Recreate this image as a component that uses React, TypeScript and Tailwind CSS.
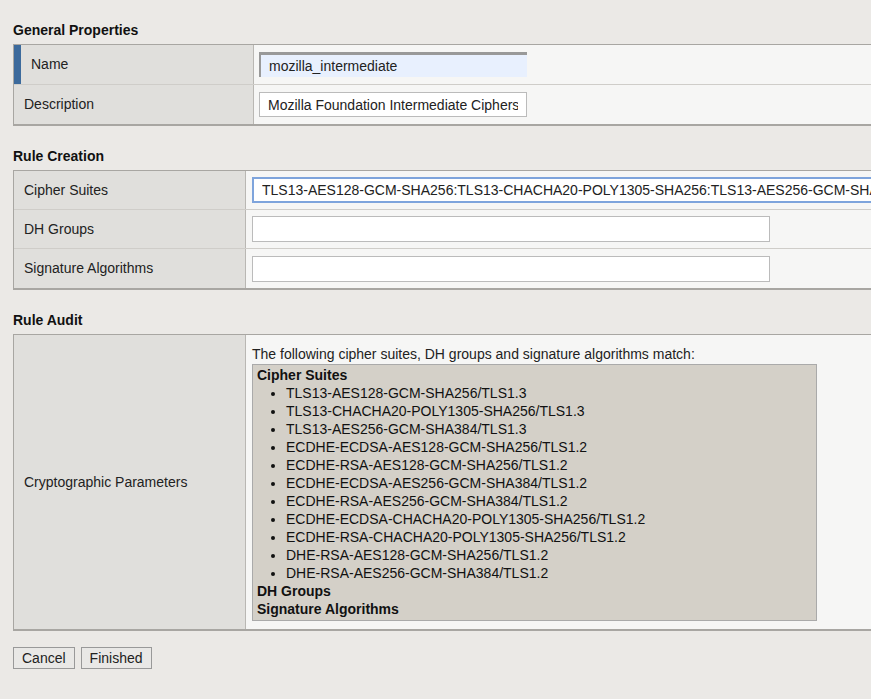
const cipherList = [
  "TLS13-AES128-GCM-SHA256/TLS1.3",
  "TLS13-CHACHA20-POLY1305-SHA256/TLS1.3",
  "TLS13-AES256-GCM-SHA384/TLS1.3",
  "ECDHE-ECDSA-AES128-GCM-SHA256/TLS1.2",
  "ECDHE-RSA-AES128-GCM-SHA256/TLS1.2",
  "ECDHE-ECDSA-AES256-GCM-SHA384/TLS1.2",
  "ECDHE-RSA-AES256-GCM-SHA384/TLS1.2",
  "ECDHE-ECDSA-CHACHA20-POLY1305-SHA256/TLS1.2",
  "ECDHE-RSA-CHACHA20-POLY1305-SHA256/TLS1.2",
  "DHE-RSA-AES128-GCM-SHA256/TLS1.2",
  "DHE-RSA-AES256-GCM-SHA384/TLS1.2",
];

const cipherValue =
  "TLS13-AES128-GCM-SHA256:TLS13-CHACHA20-POLY1305-SHA256:TLS13-AES256-GCM-SHA384:ECDHE-ECDSA-AES128-GCM-SHA256";

const Heading = ({ children }: { children: string }) => (
  <h2 className="font-bold text-[14px] leading-[16px] pl-[13px] pt-[22px] pb-[6px] text-[#111]">{children}</h2>
);

const App = () => {
  return (
    <div
      className="min-h-[699px] bg-[#ebe9e6] text-[14px] text-[#222] overflow-hidden"
      style={{ fontFamily: '"Liberation Sans", Arial, sans-serif' }}
    >
      <Heading>General Properties</Heading>
      <div className="ml-[13px] border border-r-0 border-[#a8a6a2] border-b-2">
        <div className="flex h-[40px] border-b border-[#cfcdc9]">
          <div className="w-[240px] flex items-center bg-[#e0dfdc] border-r border-[#b9b7b3]">
            <div className="w-[7px] h-full bg-[#3c6a9c]" />
            <span className="pl-[10px]">Name</span>
          </div>
          <div className="flex-1 bg-[#f6f6f5] flex items-center pl-[5px]">
            <input
              readOnly
              value="mozilla_intermediate"
              className="w-[268px] h-[25px] px-[8px] bg-[#e8f0fe] border-t-[3px] border-l-2 border-[#999] outline-none text-[14px] text-[#222]"
            />
          </div>
        </div>
        <div className="flex h-[39px]">
          <div className="w-[240px] flex items-center bg-[#e0dfdc] border-r border-[#b9b7b3] pl-[10px]">Description</div>
          <div className="flex-1 bg-[#f6f6f5] flex items-center pl-[5px]">
            <input
              readOnly
              value="Mozilla Foundation Intermediate Ciphers"
              className="w-[268px] h-[25px] px-[8px] bg-white border border-[#bbb] outline-none text-[14px] text-[#222]"
            />
          </div>
        </div>
      </div>

      <Heading>Rule Creation</Heading>
      <div className="ml-[13px] border border-r-0 border-[#a8a6a2] border-b-2">
        {[
          ["Cipher Suites", cipherValue],
          ["DH Groups", ""],
          ["Signature Algorithms", ""],
        ].map(([label, value], i) => (
          <div key={label} className={`flex h-[39px] ${i < 2 ? "border-b border-[#cfcdc9]" : ""}`}>
            <div className="w-[232px] flex items-center bg-[#e0dfdc] border-r border-[#b9b7b3] pl-[10px]">{label}</div>
            <div className="flex-1 bg-[#f6f6f5] flex items-center pl-[6px] overflow-hidden">
              {i === 0 ? (
                <input
                  readOnly
                  value={value}
                  className="w-[640px] shrink-0 h-[26px] px-[8px] bg-white border-2 border-r-0 border-[#7ea4dc] outline-none text-[14px] text-[#222]"
                />
              ) : (
                <input
                  readOnly
                  value={value}
                  className="w-[518px] h-[26px] bg-white border border-[#bbb] outline-none"
                />
              )}
            </div>
          </div>
        ))}
      </div>

      <Heading>Rule Audit</Heading>
      <div className="ml-[13px] flex border border-r-0 border-[#a8a6a2] border-b-2 h-[297px]">
        <div className="w-[232px] flex items-center bg-[#e0dfdc] border-r border-[#b9b7b3] pl-[10px]">
          Cryptographic Parameters
        </div>
        <div className="flex-1 bg-[#f6f6f5] pl-[6px] pt-[11px]">
          <p className="leading-[16px]">The following cipher suites, DH groups and signature algorithms match:</p>
          <div className="mt-[2px] w-[565px] h-[257px] bg-[#d4d0c8] border border-[#aaa] px-[4px] pt-[1px] leading-[18px] text-[#111]">
            <div className="font-bold">Cipher Suites</div>
            <ul className="list-disc pl-[29px]">
              {cipherList.map((c) => (
                <li key={c}>{c}</li>
              ))}
            </ul>
            <div className="font-bold">DH Groups</div>
            <div className="font-bold">Signature Algorithms</div>
          </div>
        </div>
      </div>

      <div className="flex gap-[6px] pl-[13px] pt-[16px]">
        {["Cancel", "Finished"].map((b) => (
          <button key={b} className="h-[22px] px-[8px] bg-[#e9e8e6] border border-[#999] text-[14px] leading-[20px] text-[#222]">
            {b}
          </button>
        ))}
      </div>
    </div>
  );
};

export default App;
